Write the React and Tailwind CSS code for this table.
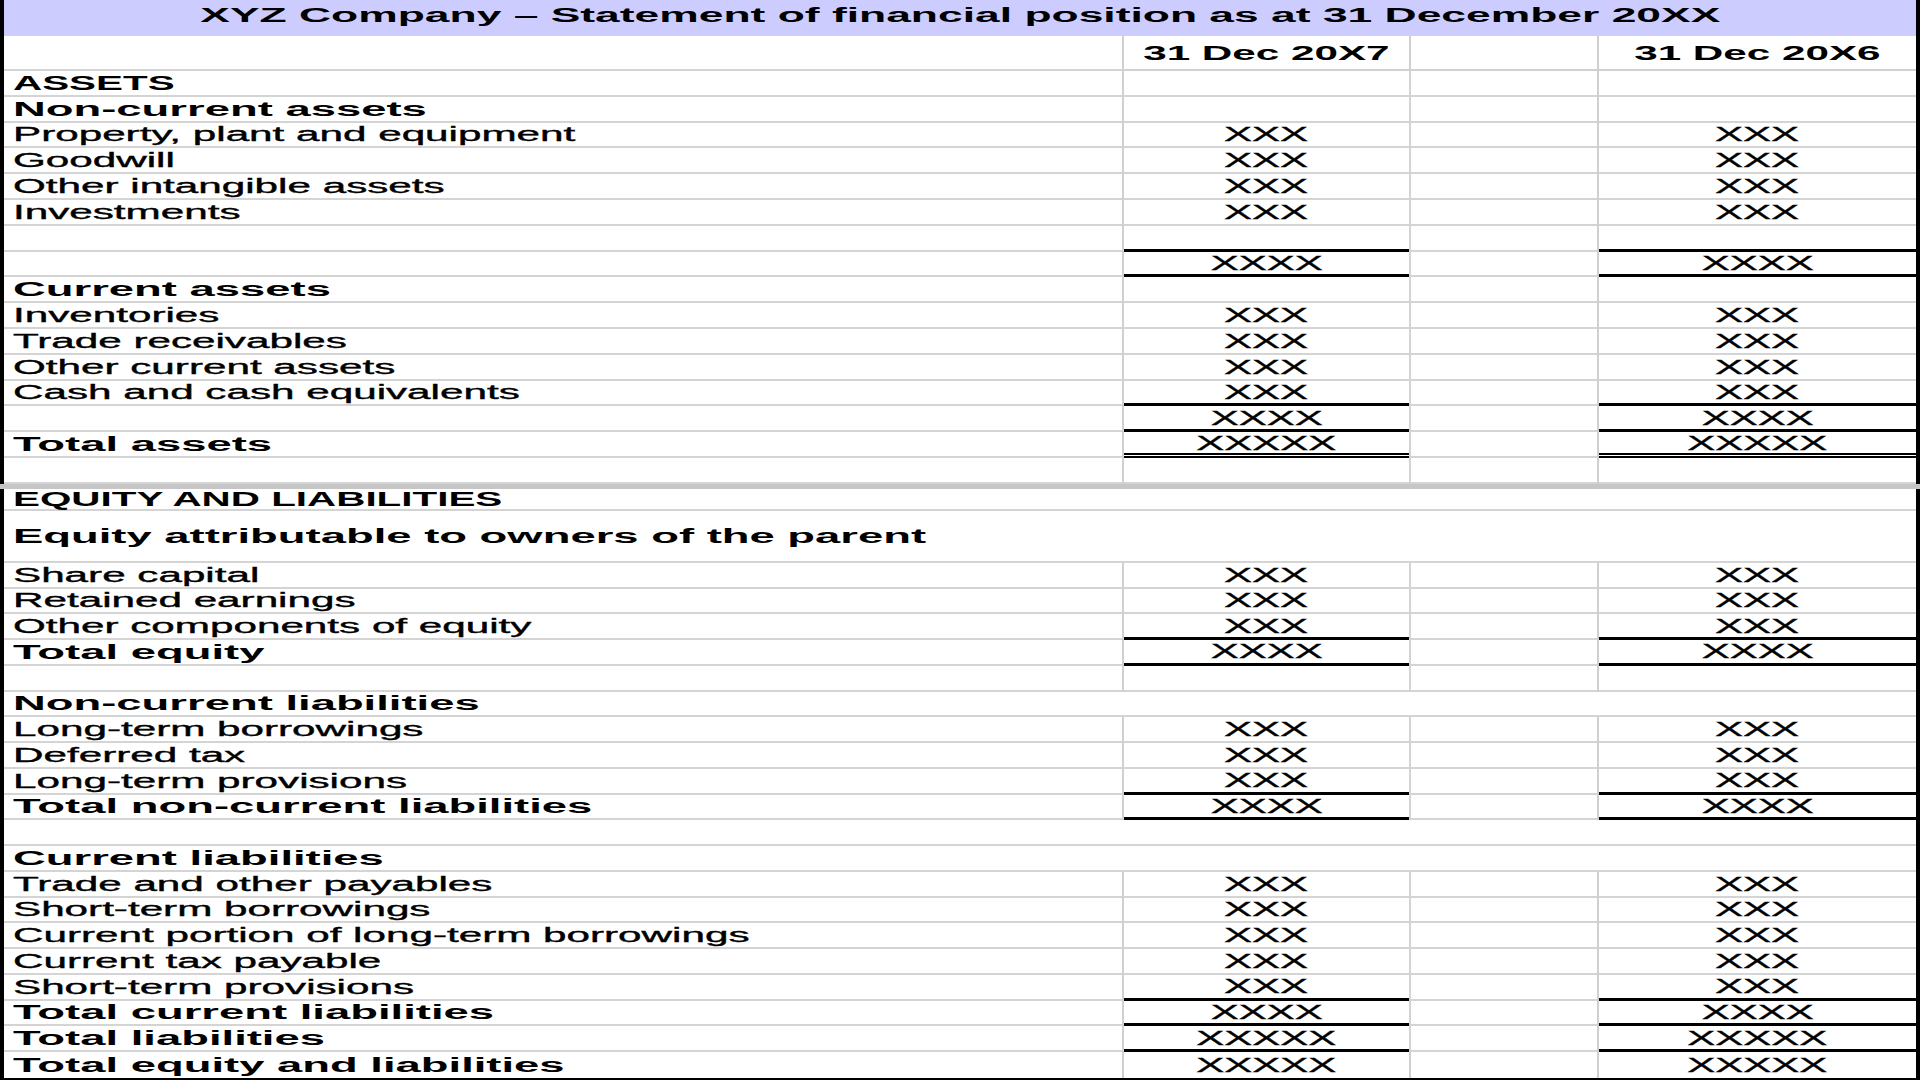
const labelStyles = {
  reg: "font-normal scale-x-[2.11] [-webkit-text-stroke:0.35px_black]",
  bold: "font-bold scale-x-[2.27]",
  caps: "font-bold scale-x-[2.02]",
};

const topRows = [
  { label: "ASSETS", kind: "caps" },
  { label: "Non-current assets", kind: "bold" },
  { label: "Property, plant and equipment", a: "XXX", b: "XXX" },
  { label: "Goodwill", a: "XXX", b: "XXX" },
  { label: "Other intangible assets", a: "XXX", b: "XXX" },
  { label: "Investments", a: "XXX", b: "XXX" },
  { label: "", bottom: "thick" },
  { label: "", a: "XXXX", b: "XXXX", bottom: "thick" },
  { label: "Current assets", kind: "bold" },
  { label: "Inventories", a: "XXX", b: "XXX" },
  { label: "Trade receivables", a: "XXX", b: "XXX" },
  { label: "Other current assets", a: "XXX", b: "XXX" },
  { label: "Cash and cash equivalents", a: "XXX", b: "XXX", bottom: "thick" },
  { label: "", a: "XXXX", b: "XXXX", bottom: "thick" },
  { label: "Total assets", kind: "bold", a: "XXXXX", b: "XXXXX", bottom: "double" },
  { label: "" },
];

const bottomRows = [
  { label: "EQUITY AND LIABILITIES", kind: "caps", open: true, h: "h-[22px]" },
  { label: "Equity attributable to owners of the parent", kind: "bold", open: true, h: "h-[52px]" },
  { label: "Share capital", a: "XXX", b: "XXX" },
  { label: "Retained earnings", a: "XXX", b: "XXX" },
  { label: "Other components of equity", a: "XXX", b: "XXX", bottom: "thick" },
  { label: "Total equity", kind: "bold", a: "XXXX", b: "XXXX", bottom: "thick" },
  { label: "" },
  { label: "Non-current liabilities", kind: "bold", open: true },
  { label: "Long-term borrowings", a: "XXX", b: "XXX" },
  { label: "Deferred tax", a: "XXX", b: "XXX" },
  { label: "Long-term provisions", a: "XXX", b: "XXX", bottom: "thick" },
  { label: "Total non-current liabilities", kind: "bold", a: "XXXX", b: "XXXX", bottom: "thick" },
  { label: "", open: true },
  { label: "Current liabilities", kind: "bold", open: true },
  { label: "Trade and other payables", a: "XXX", b: "XXX" },
  { label: "Short-term borrowings", a: "XXX", b: "XXX" },
  { label: "Current portion of long-term borrowings", a: "XXX", b: "XXX" },
  { label: "Current tax payable", a: "XXX", b: "XXX" },
  { label: "Short-term provisions", a: "XXX", b: "XXX", bottom: "thick" },
  { label: "Total current liabilities", kind: "bold", a: "XXXX", b: "XXXX", bottom: "thick" },
  { label: "Total liabilities", kind: "bold", a: "XXXXX", b: "XXXXX", bottom: "thick" },
  { label: "Total equity and liabilities", kind: "bold", a: "XXXXX", b: "XXXXX", bottom: "none" },
];

const Label = ({ text, kind = "reg" }) => (
  <span className={`inline-block origin-left whitespace-nowrap leading-none ${labelStyles[kind]}`}>
    {text}
  </span>
);

const ValueCell = ({ value, bottom }) => {
  const line =
    bottom === "thick"
      ? "border-b-[3px] border-black"
      : bottom === "double"
      ? "border-b-[5px] border-double border-black"
      : bottom === "none"
      ? ""
      : "border-b-2 border-[#d4d4d4]";
  return (
    <div className="border-l-2 border-[#d0d0d0] flex">
      <div className={`flex-1 flex items-center justify-center ${line}`}>
        {value && (
          <span className="inline-block leading-none font-normal scale-x-[2.1] [-webkit-text-stroke:0.35px_black]">
            {value}
          </span>
        )}
      </div>
    </div>
  );
};

const Row = ({ row, h = "h-[25.8px]" }) => {
  const height = row.h || h;
  const grid = row.bottom === "none" ? "" : "border-b-2 border-[#d4d4d4]";
  if (row.open) {
    return (
      <div className={`${height} ${grid} flex items-center pl-[9px]`}>
        {row.label && <Label text={row.label} kind={row.kind} />}
      </div>
    );
  }
  return (
    <div className={`${height} grid grid-cols-[1118px_287px_188px_1fr]`}>
      <div className={`flex items-center pl-[9px] ${grid}`}>
        {row.label && <Label text={row.label} kind={row.kind} />}
      </div>
      <ValueCell value={row.a} bottom={row.bottom} />
      <div className={`border-l-2 border-[#d0d0d0] ${grid}`} />
      <ValueCell value={row.b} bottom={row.bottom} />
    </div>
  );
};

export default function App() {
  return (
    <div className="w-[1920px] h-[1080px] overflow-hidden bg-white text-black text-[20px] font-['Liberation_Sans',Arial,sans-serif]">
      <div className="border-x-4 border-black">
        <div className="h-[36px] bg-[#ccccff] flex items-center justify-center pb-[6px]">
          <span className="inline-block whitespace-nowrap leading-none font-bold scale-x-[2.22]">
            XYZ Company – Statement of financial position as at 31 December 20XX
          </span>
        </div>
        <div className="h-[35px] grid grid-cols-[1118px_287px_188px_1fr]">
          <div className="border-b-2 border-[#d4d4d4]" />
          <div className="border-l-2 border-b-2 border-[#d0d0d0] flex items-center justify-center">
            <span className="inline-block leading-none whitespace-nowrap font-bold scale-x-[2.11]">31 Dec 20X7</span>
          </div>
          <div className="border-l-2 border-b-2 border-[#d0d0d0]" />
          <div className="border-l-2 border-b-2 border-[#d0d0d0] flex items-center justify-center">
            <span className="inline-block leading-none whitespace-nowrap font-bold scale-x-[2.11]">31 Dec 20X6</span>
          </div>
        </div>
        {topRows.map((row, i) => (
          <Row key={i} row={row} />
        ))}
      </div>
      <div className="h-[5px] bg-[#c6c6c6]" />
      <div className="border-x-4 border-b-2 border-black">
        {bottomRows.map((row, i) => (
          <Row key={i} row={row} h="h-[25.75px]" />
        ))}
      </div>
    </div>
  );
}
